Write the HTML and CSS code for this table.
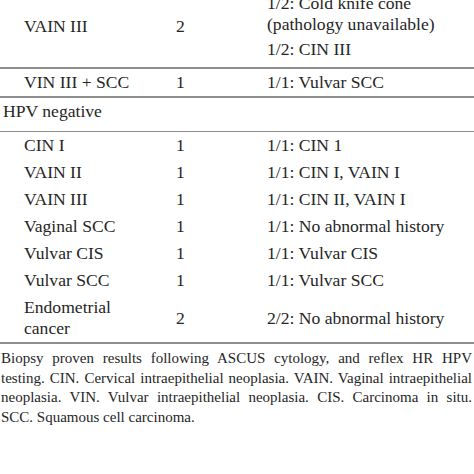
FILE: index.html
```html
<!DOCTYPE html>
<html>
<head>
<meta charset="utf-8">
<link rel="stylesheet" href="styles.css">
</head>
<body>
<div class="page">
  <table class="t">
    <colgroup>
      <col class="w1"><col class="w2"><col class="w3">
    </colgroup>
    <tr class="first">
      <td class="c1">VAIN III</td>
      <td class="c2">2</td>
      <td class="c3"><p class="para">1/2: Cold knife cone<br>(pathology unavailable)</p><p class="para">1/2: CIN III</p></td>
    </tr>
    <tr class="row thick">
      <td class="c1">VIN III + SCC</td>
      <td class="c2">1</td>
      <td class="c3">1/1: Vulvar SCC</td>
    </tr>
    <tr class="group thick">
      <td class="gh" colspan="3">HPV negative</td>
    </tr>
    <tr class="row thin">
      <td class="c1">CIN I</td>
      <td class="c2">1</td>
      <td class="c3">1/1: CIN 1</td>
    </tr>
    <tr class="row">
      <td class="c1">VAIN II</td>
      <td class="c2">1</td>
      <td class="c3">1/1: CIN I, VAIN I</td>
    </tr>
    <tr class="row">
      <td class="c1">VAIN III</td>
      <td class="c2">1</td>
      <td class="c3">1/1: CIN II, VAIN I</td>
    </tr>
    <tr class="row">
      <td class="c1">Vaginal SCC</td>
      <td class="c2">1</td>
      <td class="c3">1/1: No abnormal history</td>
    </tr>
    <tr class="row">
      <td class="c1">Vulvar CIS</td>
      <td class="c2">1</td>
      <td class="c3">1/1: Vulvar CIS</td>
    </tr>
    <tr class="row">
      <td class="c1">Vulvar SCC</td>
      <td class="c2">1</td>
      <td class="c3">1/1: Vulvar SCC</td>
    </tr>
    <tr class="row last">
      <td class="c1">Endometrial<br>cancer</td>
      <td class="c2">2</td>
      <td class="c3">2/2: No abnormal history</td>
    </tr>
  </table>
  <p class="note"><span class="jl">Biopsy proven results following ASCUS cytology, and reflex HR HPV</span><span class="jl">testing. CIN. Cervical intraepithelial neoplasia. VAIN. Vaginal intraepithelial</span><span class="jl">neoplasia. VIN. Vulvar intraepithelial neoplasia. CIS. Carcinoma in situ.</span><span class="ll">SCC. Squamous cell carcinoma.</span></p>
</div>
</body>
</html>
```

FILE: styles.css
```css
html, body {
  margin: 0;
  padding: 0;
  background: #ffffff;
}
body {
  width: 474px;
  height: 474px;
  overflow: hidden;
  font-family: "Liberation Serif", "Times New Roman", serif;
  color: #262626;
}
.page {
  width: 474px;
}
.t {
  margin-top: -10px;
  width: 474px;
  border-collapse: collapse;
  font-family: "Liberation Serif", "Times New Roman", serif;
  font-size: 17.6px;
  line-height: 21px;
  color: #262626;
}
.w1 { width: 176px; }
.w2 { width: 91px; }
.w3 { width: 207px; }
.t td {
  padding: 3px 0;
  vertical-align: middle;
}
.c1 { padding-left: 24px !important; }
.para { margin: 0; }
.para + .para { margin-top: 4px; }
.first td { padding-bottom: 7px; }
.thick { border-top: 2px solid #8e8e8e; }
.thin { border-top: 1px solid #8e8e8e; }
.t .gh {
  padding: 3px 0 9px 3px;
}
.t .row td { height: 21px; }
.last { border-bottom: 2px solid #8e8e8e; }
.note {
  margin: 0;
  padding: 5px 2px 0 1px;
  font-size: 15px;
  line-height: 19.5px;
}
.jl {
  display: block;
  text-align: justify;
  text-align-last: justify;
  white-space: nowrap;
}
.ll {
  display: block;
  text-align: left;
}
```
